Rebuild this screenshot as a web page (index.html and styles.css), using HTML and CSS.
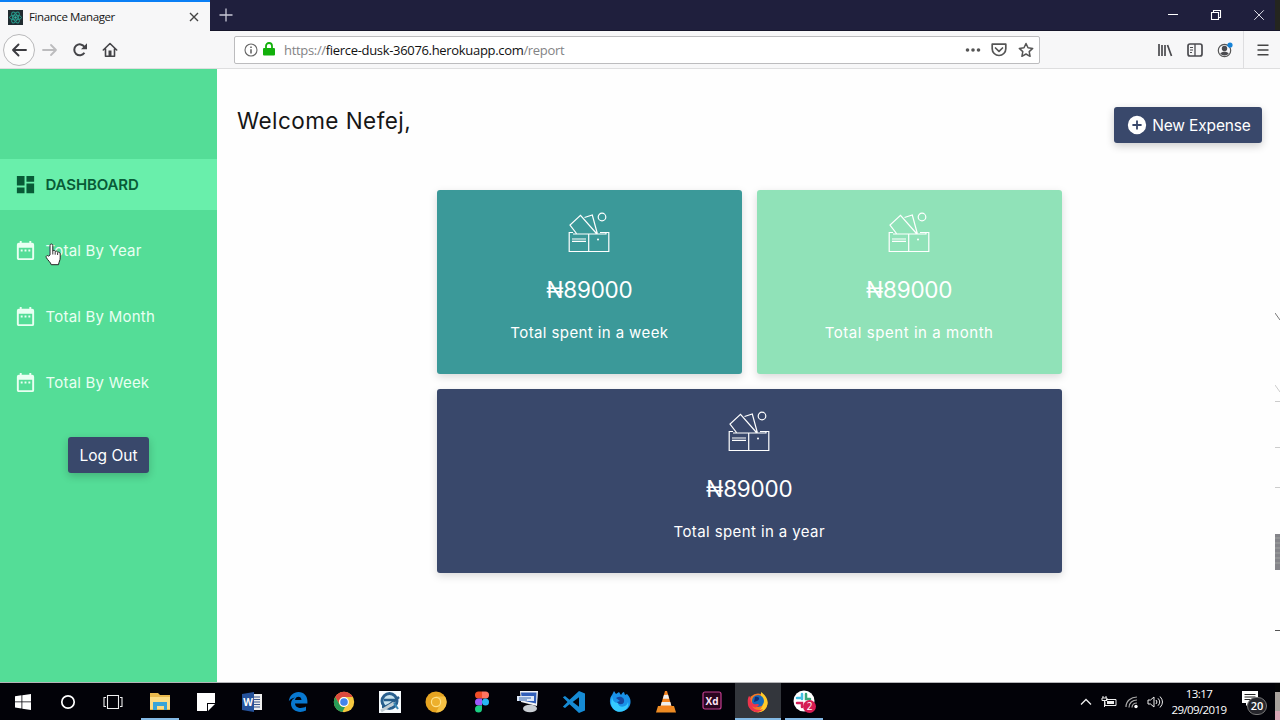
FILE: index.html
```html
<!DOCTYPE html>
<html lang="en">
<head>
<meta charset="utf-8">
<title>Finance Manager</title>
<link rel="stylesheet" href="styles.css">
</head>
<body>
<svg class="defs" width="0" height="0" aria-hidden="true">
  <symbol id="calendar" viewBox="0 0 24 24"><path d="M9 11H7v2h2v-2zm4 0h-2v2h2v-2zm4 0h-2v2h2v-2zm2-7h-1V2h-2v2H8V2H6v2H5a2 2 0 0 0-2 2v14c0 1.100.9 2 2 2h14a2 2 0 0 0 2-2V6a2 2 0 0 0-2-2zm0 16H5V9h14v11z"/></symbol>
  <symbol id="wallet" viewBox="0 0 42 42"><g fill="none" stroke="#fff" stroke-width="1.200"><path d="M5 20.500H1.200v19h39.600v-19H32M5 22h33v-1.500M20.700 22.500v17M4 27h14M4 29.300h14M8.500 21.500 2 13 12.500 3.300 28.500 21.500M16.500 5.500 24.300 3l5 18.500"/><circle cx="34" cy="5" r="3.800"/></g><circle cx="30" cy="27.600" r="1" fill="#fff"/></symbol>
</svg>

<header class="titlebar">
  <div class="tab">
    <svg class="favicon" viewBox="0 0 15 15"><path fill="#202b30" d="M0 0h15v15H0z"/><g fill="none" stroke="#289a8c"><ellipse cx="7.500" cy="7.500" rx="6" ry="2.400"/><ellipse cx="7.500" cy="7.500" rx="6" ry="2.400" transform="rotate(60 7.500 7.500)"/><ellipse cx="7.500" cy="7.500" rx="6" ry="2.400" transform="rotate(120 7.500 7.500)"/></g><circle cx="7.500" cy="7.500" r="1.200" fill="#38b5a5"/></svg>
    <span class="tab-title">Finance Manager</span>
    <svg class="tab-close" viewBox="0 0 10 10"><path d="m1 1 8 8m0-8L1 9" fill="none" stroke="#444" stroke-width="1.400"/></svg>
  </div>
  <svg class="new-tab" viewBox="0 0 14 14"><path d="M7 .5v13M.5 7h13" stroke="#c9c9d6" stroke-width="1.300"/></svg>
  <div class="window-buttons">
    <svg viewBox="0 0 12 12"><path d="M1 5.500h10" stroke="#fff"/></svg>
    <svg viewBox="0 0 12 12"><path d="M1.500 3.500h7v7h-7zM3.500 3V1.500h7v7H9" fill="none" stroke="#fff" stroke-width="1.100"/></svg>
    <svg viewBox="0 0 12 12"><path d="m1.300 1.300 9.500 9.500m0-9.500-9.500 9.500" stroke="#dedee8" stroke-width="1"/></svg>
  </div>
  <i class="edge"></i>
</header>

<nav class="toolbar">
  <div class="nav-buttons">
    <span class="back"><svg width="16" height="16" viewBox="0 0 16 16"><path d="M15 8H2M7.500 2.500 2 8l5.500 5.500" fill="none" stroke="#3c3c40" stroke-width="1.900" stroke-linecap="round" stroke-linejoin="round"/></svg></span>
    <svg width="16" height="16" viewBox="0 0 16 16"><path d="M1 8h13M9 3l5 5-5 5" fill="none" stroke="#bcbcbe" stroke-width="1.800" stroke-linecap="round" stroke-linejoin="round"/></svg>
    <svg width="16" height="16" viewBox="0 0 16 16"><path d="M12.400 10.800A5.500 5.500 0 1 1 12.500 5" fill="none" stroke="#444448" stroke-width="2"/><path d="M15 1.200v6H9z" fill="#444448"/></svg>
    <svg width="16" height="16" viewBox="0 0 16 16"><path d="M1.300 8 8 1.500 14.700 8M3.500 7v7.300h9V7" fill="none" stroke="#444448" stroke-width="1.600" stroke-linecap="round" stroke-linejoin="round"/><path d="M6.500 8.500h3V14h-3z" fill="#444448"/></svg>
  </div>
  <div class="urlbar">
    <svg width="14" height="14" viewBox="0 0 14 14"><circle cx="7" cy="7" r="6" fill="none" stroke="#666" stroke-width="1.100"/><path d="M6.200 6.200h1.600v4.400H6.200zM6.200 3.400h1.600v1.700H6.200z" fill="#666"/></svg>
    <svg class="lock" width="12" height="14" viewBox="0 0 12 14"><path d="M3 7V4a3 3 0 0 1 6 0v3" fill="none" stroke="#12b00b" stroke-width="1.800"/><rect y="6" width="12" height="7.500" rx="1" fill="#12b00b"/></svg>
    <span class="url">https://<b>fierce-dusk-36076.herokuapp.com</b>/report</span>
    <svg class="dots" width="16" height="16" viewBox="0 0 16 16"><g fill="#555"><circle cx="2.500" cy="8" r="1.800"/><circle cx="8" cy="8" r="1.800"/><circle cx="13.500" cy="8" r="1.800"/></g></svg>
    <svg class="pocket" width="16" height="16" viewBox="0 0 16 16"><path d="M1.200 2.200h13.600v4.500a6.800 6.800 0 0 1-13.600 0zM4.500 6 8 9.300 11.500 6" fill="none" stroke="#555" stroke-width="1.700" stroke-linecap="round" stroke-linejoin="round"/></svg>
    <svg width="16" height="16" viewBox="0 0 16 16"><path d="m8 1.500 2 4.300 4.700.6-3.500 3.200.9 4.700L8 12l-4.100 2.300.9-4.700L1.300 6.400 6 5.800z" fill="none" stroke="#555" stroke-width="1.500" stroke-linejoin="round"/></svg>
  </div>
  <div class="tools">
    <svg width="16" height="16" viewBox="0 0 16 16"><path d="M2 2v12M5 3v11M8 3v11M10.500 3l4 11" fill="none" stroke="#4b4b4f" stroke-width="1.700"/></svg>
    <svg width="16" height="16" viewBox="0 0 16 16"><rect x="1" y="2" width="14" height="12" rx="2" fill="none" stroke="#4b4b4f" stroke-width="1.700"/><path d="M8 2v12" stroke="#4b4b4f" stroke-width="1.300"/><path d="M3 5.500h3M3 8h3M3 10.500h2" stroke="#4b4b4f"/></svg>
    <svg width="16" height="16" viewBox="0 0 16 16"><circle cx="7.500" cy="8.500" r="6.200" fill="none" stroke="#555" stroke-width="1.200"/><circle cx="7.500" cy="6.500" r="2.700" fill="#4b4b4f"/><path d="M3.300 11.500c1.500-2.500 6.900-2.500 8.400 0-1.800 2.500-6.600 2.500-8.400 0z" fill="#4b4b4f"/><circle cx="13" cy="3" r="2.600" fill="#1583d8"/></svg>
    <span class="menu"><svg width="12" height="12" viewBox="0 0 12 12"><path d="M.5 1.300h11M.5 6h11M.5 10.700h11" stroke="#444" stroke-width="1.500"/></svg></span>
  </div>
</nav>

<main class="page">
  <aside class="sidebar">
    <a class="side-link active"><svg viewBox="0 0 24 24"><path d="M3 13h8V3H3v10zm0 8h8v-6H3v6zm10 0h8V11h-8v10zm0-18v6h8V3h-8z"/></svg><span>DASHBOARD</span></a>
    <a class="side-link"><svg><use href="#calendar"/></svg><span>Total By Year</span></a>
    <a class="side-link"><svg><use href="#calendar"/></svg><span>Total By Month</span></a>
    <a class="side-link"><svg><use href="#calendar"/></svg><span>Total By Week</span></a>
    <a class="button logout"><span>Log Out</span></a>
    <svg class="cursor" viewBox="0 0 17 23"><path d="M5 12V2.600C5 .5 7.800.5 7.800 2.600V8c.6-1 2.300-.6 2.400.5.8-.8 2.300-.3 2.400.9 1-.7 2.600-.1 2.600 1.500v4c0 2.500-1.200 3.500-1.700 6.800H6.200c-.4-2.200-3.400-4.300-4.900-7.100-.9-1.800 1.300-2.700 2.300-1.500z" fill="#fff" stroke="#222"/><path d="M7.800 8v3.500M10.200 9v2.700M12.600 10v2" stroke="#222" stroke-width=".9"/></svg>
  </aside>
  <section class="content">
    <div class="heading">
      <h1>Welcome Nefej,</h1>
      <a class="button add"><svg viewBox="0 0 24 24"><path fill="#fff" d="M12 2a10 10 0 1 0 0 20 10 10 0 0 0 0-20zm5 11h-4v4h-2v-4H7v-2h4V7h2v4h4v2z"/></svg><span>New Expense</span></a>
    </div>
    <div class="cards">
      <article class="card week"><svg><use href="#wallet"/></svg><strong>₦89000</strong><p>Total spent in a week</p></article>
      <article class="card month"><svg><use href="#wallet"/></svg><strong>₦89000</strong><p>Total spent in a month</p></article>
      <article class="card year"><svg><use href="#wallet"/></svg><strong>₦89000</strong><p>Total spent in a year</p></article>
    </div>
    <svg class="desktop-edge" viewBox="0 0 5 614"><path d="m0 244 5 7" stroke="#777"/><path d="m0 316 5 7M0 332.500h5M0 378.500h5M0 418.500h5" stroke="#ccc"/><path d="M0 465h5v36H0z" fill="#85858a"/><path d="M0 469h5m-5 5h5m-5 5h5m-5 5h5m-5 5h5m-5 5h5" stroke="#a0a3a0"/><path d="M0 561.500h5" stroke="#555"/></svg>
  </section>
</main>

<footer class="taskbar">
  <div class="system">
    <span><svg width="16" height="16" viewBox="0 0 16 16"><path fill="#fff" d="M0 2.300 6.500 1.300v6.200H0zM7.300 1.200 16 0v7.500H7.300zM0 8.300h6.500v6.200L0 13.600zM7.300 8.300H16V16l-8.700-1.300z"/></svg></span>
    <span><svg width="16" height="16" viewBox="0 0 16 16"><circle cx="8" cy="8" r="6.200" fill="none" stroke="#fff" stroke-width="1.700"/></svg></span>
    <span><svg width="20" height="16" viewBox="0 0 20 16"><path d="M4.500 1.500h11v13h-11zM3 3.500H1v9h2M17 3.500h2v9h-2" fill="none" stroke="#eee" stroke-width="1.100"/></svg></span>
  </div>
  <div class="apps">
    <span class="open"><svg width="22" height="20" viewBox="0 0 22 20"><path fill="#e9b94d" d="M1 1h8l2 2h10v15H1z"/><path fill="#fbdc85" d="M1 5h20v12H1z"/><path fill="#37a4d8" d="M4 10h14v8h-3v-4H8v4H4z"/></svg></span>
    <span><svg width="18" height="18" viewBox="0 0 18 18"><path fill="#fff" d="M0 0h18v10h-8v8H0z"/><path fill="#fff" d="M11 18v-7h7z"/></svg></span>
    <span><svg width="22" height="22" viewBox="0 0 22 22"><path fill="#eee" d="M10 3h11v16H10z"/><path d="M13 6h6m-6 2.500h6M13 11h6m-6 2.500h6M13 16h6" stroke="#38558c"/><path fill="#25529b" d="m1 3 12-2v20L1 19z"/><text x="7" y="14.500" class="word">W</text></svg></span>
    <span><svg width="20" height="20" viewBox="0 0 20 20"><path fill="#0878d0" d="M.8 9.200C1.500 3.500 5.500 0 10.500 0 16 0 19.400 4.200 19.400 9v2.500H7c.3 5 7 5.500 11 3v4c-6.500 3.300-14.800.5-15-6.500C2.900 8.500 5 6.500 7 5.500 4.500 6 2.500 7 .8 9.200zM7 8h6.500C13.500 3.500 7.500 3.500 7 8z"/></svg></span>
    <span><svg width="22" height="22" viewBox="0 0 22 22"><circle cx="11" cy="11" r="10.200" fill="#f5c83f"/><path fill="#dc4b3e" d="M2.200 5.900A10.200 10.200 0 0 1 19.800 5.900H11a5 5 0 0 0-4.400 7.500z"/><path fill="#289b58" d="M2.200 5.900 6.600 13.500a5 5 0 0 0 5.400 2.400L9.400 21.100A10.200 10.200 0 0 1 2.200 5.900z"/><circle cx="11" cy="11" r="4.900" fill="#fff"/><circle cx="11" cy="11" r="3.800" fill="#4284ec"/></svg></span>
    <span><svg width="22" height="22" viewBox="0 0 22 22"><path fill="#f7fbfd" d="M0 0h22v22H0z"/><circle cx="10.500" cy="10" r="7.500" fill="#c9e3ee" stroke="#285f8e" stroke-width="3"/><path d="M5 9h11M3 16c5 0 9-3 17-10" stroke="#255b89" stroke-width="2.500" fill="none"/><path d="m2 20 13-8" stroke="#c1ccd2" stroke-width="3"/><path d="m15 12 4 6" stroke="#3a89b6" stroke-width="2"/></svg></span>
    <span><svg width="22" height="22" viewBox="0 0 22 22"><circle cx="11" cy="11" r="10.500" fill="#e6a421"/><path fill="#f6c244" d="M11 5.500h9A10.500 10.500 0 0 1 11 21.500l4-8z"/><circle cx="11" cy="11" r="5.200" fill="#ffe28a"/><circle cx="11" cy="11" r="4" fill="#edb02d"/></svg></span>
    <span><svg width="16" height="22" viewBox="0 0 16 22"><path fill="#f04e28" d="M8 .5H4.500a3.500 3.500 0 0 0 0 7H8z"/><path fill="#ff7561" d="M8 .5h3.500a3.500 3.500 0 0 1 0 7H8z"/><path fill="#9d59fa" d="M8 7.500H4.500a3.500 3.500 0 0 0 0 7H8z"/><circle cx="11.500" cy="11" r="3.500" fill="#28b6f6"/><path fill="#1bce82" d="M8 14.500H4.500A3.500 3.500 0 1 0 8 18z"/></svg></span>
    <span><svg width="24" height="23" viewBox="0 0 24 23"><ellipse cx="14" cy="18.500" rx="7" ry="3.800" fill="#c9ced3"/><path fill="#f4f5f7" d="M4 1h18l-1 15-16-4z"/><path fill="#315eb8" d="M5 2.500h15.500l-.5 11L6 10.500z"/><path fill="#dfe9f8" d="M1 6h17v5H1z"/><path d="M3 8h12M3 10h8" stroke="#3b68ac"/></svg></span>
    <span><svg width="24" height="24" viewBox="0 0 24 24"><path fill="#168bd4" d="m17 1 6 2.500v17L17 23 7.500 14.300 3 18 .8 16.800 5.500 12 .8 7.200 3 6l4.500 3.700zM17 7.300 10.700 12l6.300 4.700z"/></svg></span>
    <span><svg width="23" height="23" viewBox="0 0 23 23"><path fill="#1991e8" d="M3 5 5 1l2 3 3-2 2 3c1-2 2-3 3-3l1 3 2-1c4 4 4 8 3 11-3 8-15 9-19 1-2-4-1-9 1-11z"/><path fill="#35caff" d="M3 5c0 5 2 8 6 8 0 5 9 5 10-1 3 10-14 15-17 2z"/><path fill="#17469d" d="M7 8c5-3 9 0 8 4-1 3-5 3-7 0l3-1z"/></svg></span>
    <span><svg width="20" height="22" viewBox="0 0 20 22"><path fill="#ed8b23" d="M2 15h16l2 6.500H0z"/><path fill="#f4841f" d="M9 0h2l5 17c-3 2-9 2-12 0z"/><path fill="#eee" d="m8 4 4-.2 1.200 4H6.800zM5.700 11h8.600l1 3.500H4.700z"/></svg></span>
    <span class="xd"><svg width="20" height="20" viewBox="0 0 20 20"><rect x="1" y="1" width="18" height="17" rx="2" fill="#2a061f" stroke="#c23c8e" stroke-width="1.200"/><text x="10" y="13.700" class="xd-label">Xd</text></svg></span>
    <span class="current"><svg width="22" height="22" viewBox="0 0 22 22"><circle cx="11" cy="12" r="9.500" fill="#f57924"/><path fill="#ffca28" d="M14 1c8 5 9 14 2 19-4 2-7 1-9 0 8 1 11-7 7-13z"/><circle cx="11" cy="10" r="6" fill="#1769b8"/><path fill="#ed344c" d="M2 5c3 2 0 6 5 8 2 1 4-1 5 1-2 3-5 3-7 1 2 4 7 5 11 3-3 5-13 4-15-4-.5-4-.5-6 1-9z"/><path fill="#122c72" d="M8 6c5-1 5 3 2 4l-3 1z"/></svg></span>
    <span class="open"><svg width="23" height="24" viewBox="0 0 23 24"><circle cx="11" cy="11" r="10.500" fill="#fff"/><path d="M9 4v5M4 8h5" stroke="#42bfe3" stroke-width="2.500" stroke-linecap="round"/><path d="M13 4v5h4" fill="none" stroke="#38a779" stroke-width="2.500" stroke-linecap="round"/><path d="M4 13h5v4" fill="none" stroke="#d21e58" stroke-width="2.500" stroke-linecap="round"/><circle cx="16.500" cy="16.500" r="6.500" fill="#d61c53"/><text x="16.500" y="20" class="badge-label">2</text></svg></span>
  </div>
  <div class="tray">
    <svg width="14" height="14" viewBox="0 0 14 14"><path d="m2 9.500 5-5 5 5" fill="none" stroke="#eee" stroke-width="1.300"/></svg>
    <svg width="16" height="14" viewBox="0 0 16 14"><path d="M5 4.500h10v6H4v-4M2 1v2M5 1v2M1 3h5v2.500H1zM3.500 6v6" fill="none" stroke="#eee"/><path d="M6 6h7v3H6z" fill="#eee"/></svg>
    <svg width="14" height="14" viewBox="0 0 14 14"><g fill="none" stroke="#aaa" stroke-width="1.200"><path d="M1 12C1 6 6 2 12 2"/><path d="M4 12.500c0-4.500 3.500-7.500 8-7.500M7 12.500C7 10 9 8 12 8"/></g><circle cx="11" cy="11.500" r="1.700" fill="#fff"/></svg>
    <svg width="17" height="14" viewBox="0 0 17 14"><path d="M1 5h2.500L7 2v10L3.500 9H1z" fill="none" stroke="#eee"/><path d="M9 5q2 2 0 4M11 3.300q3.500 3.700 0 7.400M13 1.500q5 5.500 0 11" fill="none" stroke="#eee"/></svg>
    <div class="clock"><span>13:17</span><span>29/09/2019</span></div>
    <div class="notice"><svg width="16" height="16" viewBox="0 0 16 16"><path fill="#fff" d="M0 0h16v12H7l-3 3v-3H0z"/><path d="M2.500 3.500h11m-11 2.500h11m-11 2.500H10" stroke="#222"/></svg><span>20</span></div>
    <i class="tray-edge"></i>
  </div>
</footer>
</body>
</html>
```
FILE: styles.css
```css
* { box-sizing: border-box; }
body { margin: 0; width: 1280px; height: 720px; overflow: hidden; display: flex; flex-direction: column; background: #fefefe; font-family: Inter, "Open Sans", sans-serif; }
svg { display: block; flex: none; }
.defs { position: absolute; }

.titlebar { height: 31px; flex: none; display: flex; align-items: center; background: #1f1f3d; border-bottom: 1px solid #15152a; }
.tab { width: 210px; height: 31px; align-self: flex-start; display: flex; align-items: center; padding: 1px 11px 0 8px; background: #f7f7f8; border-top: 2px solid #0a7ff5; }
.favicon { width: 15px; height: 15px; margin-right: 6px; }
.tab-title { flex: 1; font: 11.500px/16px "Open Sans", sans-serif; letter-spacing: -.4px; color: #161616; white-space: nowrap; }
.tab-close { width: 10px; height: 10px; }
.new-tab { width: 14px; height: 14px; margin-left: 9px; }
.window-buttons { margin-left: auto; display: flex; gap: 31px; margin-right: 10px; }
.window-buttons svg { width: 12px; height: 12px; }
.edge { width: 5px; height: 30px; background: #24251f; }

.toolbar { height: 38px; flex: none; display: flex; align-items: center; background: #f7f7f8; border-bottom: 1px solid #dededf; }
.nav-buttons { width: 234px; display: flex; align-items: center; gap: 14px; padding-left: 3px; }
.back { width: 32px; height: 32px; border: 1px solid #b9b9bb; border-radius: 50%; background: #fcfcfc; display: grid; place-items: center; margin-right: -7px; }
.urlbar { width: 806px; height: 28px; border: 1px solid #bcbcbe; border-radius: 2px; background: #fff; display: flex; align-items: center; padding: 0 5px 0 9px; }
.lock { margin: 0 9px 1px 5px; }
.url { flex: 1; padding-top: 1px; font: 13px/20px "Open Sans", sans-serif; letter-spacing: -.32px; color: #838385; white-space: nowrap; }
.url b { font-weight: 400; color: #111; }
.dots { margin-right: 10px; }
.pocket { margin-right: 11px; }
.tools { flex: 1; height: 37px; display: flex; align-items: center; gap: 14px; padding-left: 117px; }
.menu { height: 37px; border-left: 1px solid #dedee0; display: flex; align-items: center; padding-left: 13px; margin-left: -4px; }

.page { height: 614px; flex: none; display: flex; border-bottom: 1px solid #b5b5b8; }
.sidebar { position: relative; width: 217px; flex: none; background: #54dd97; padding-top: 90px; display: flex; flex-direction: column; }
.side-link { height: 50px; margin-bottom: 15.700px; display: flex; align-items: center; padding-left: 13.500px; color: #e9fff2; fill: #e9fff2; font-size: 15px; letter-spacing: .22px; }
.side-link svg { width: 23px; height: 23px; margin-right: 9px; }
.side-link span { white-space: nowrap; }
.active { height: 51px; background: #69efab; color: #085b37; fill: #085b37; font-weight: 600; letter-spacing: -.12px; }
.button { display: flex; align-items: center; justify-content: center; border-radius: 3px; background: #39486b; color: #fff; font-size: 15.500px; white-space: nowrap; box-shadow: 0 3px 8px rgba(0, 0, 0, .2); }
.logout { width: 81px; height: 36px; margin: 14.500px auto 0; }
.cursor { position: absolute; left: 45px; top: 174px; width: 17px; height: 23px; }

.content { position: relative; flex: 1; padding: 38px 18px 0 20px; }
.heading { height: 83px; display: flex; justify-content: space-between; align-items: flex-start; }
h1 { margin: 0; font-size: 22.500px; line-height: 28px; font-weight: 400; letter-spacing: .45px; color: #161616; white-space: nowrap; }
.add { width: 148px; height: 36px; padding-left: 1px; }
.add span { letter-spacing: -.15px; }
.add svg { width: 22px; height: 22px; margin-right: 4px; }
.cards { width: 624.500px; margin-left: 200px; display: grid; grid-template-columns: 1fr 1fr; gap: 15px; }
.card { height: 184px; display: flex; flex-direction: column; align-items: center; border-radius: 3px; padding-top: 22px; color: #fff; box-shadow: 0 3px 9px rgba(0, 0, 0, .15); }
.card svg { width: 42px; height: 42px; }
.card strong { margin-top: 20px; font-size: 22.500px; line-height: 32px; font-weight: 400; letter-spacing: -.25px; }
.card p { margin: 14.500px 0 0; font-size: 15px; line-height: 24px; letter-spacing: .4px; white-space: nowrap; }
.week { background: #3b9999; }
.month { background: #90e2b8; }
.month p { letter-spacing: .55px; }
.year { grid-column: 1 / -1; background: #39486b; }
.desktop-edge { position: absolute; right: 0; top: 0; width: 5px; height: 614px; }

.taskbar { height: 37px; flex: none; display: flex; background: #020208; color: #fff; }
.system { display: flex; width: 137px; }
.system span { width: 45px; display: grid; place-items: center; }
.apps { display: flex; }
.apps span { width: 46px; display: grid; place-items: center; }
.apps .open { background: linear-gradient(#83b9e5, #83b9e5) center bottom / 38px 2px no-repeat; }
.apps .current { background: #33363c; border-bottom: 2px solid #83b9e5; padding-top: 2px; }
.apps .xd { padding-bottom: 2px; }
.word { font: 700 10px "Open Sans", sans-serif; text-anchor: middle; fill: #fff; }
.xd-label { font: 700 10px "Open Sans", sans-serif; text-anchor: middle; fill: #ffe5f6; }
.badge-label { font: 10px "Open Sans", sans-serif; text-anchor: middle; fill: #fff; }
.tray { margin-left: auto; display: flex; align-items: center; gap: 8px; }
.clock { width: 56px; margin: 0 3px 0 -1px; display: flex; flex-direction: column; align-items: center; font: 11.500px/16px "Open Sans", sans-serif; letter-spacing: -.6px; }
.notice { position: relative; width: 29px; height: 28px; padding: 3px 0 0 4px; }
.notice span { position: absolute; left: 9px; top: 9px; width: 20px; height: 18px; border: 1px solid #777; border-radius: 9px; background: #25252b; font: 600 11px/16px "Open Sans", sans-serif; text-align: center; }
.tray-edge { width: 5px; height: 37px; background: linear-gradient(#050507 0 25%, #a7a19c 25% 75%, #d6a5b4 75%); }
```
